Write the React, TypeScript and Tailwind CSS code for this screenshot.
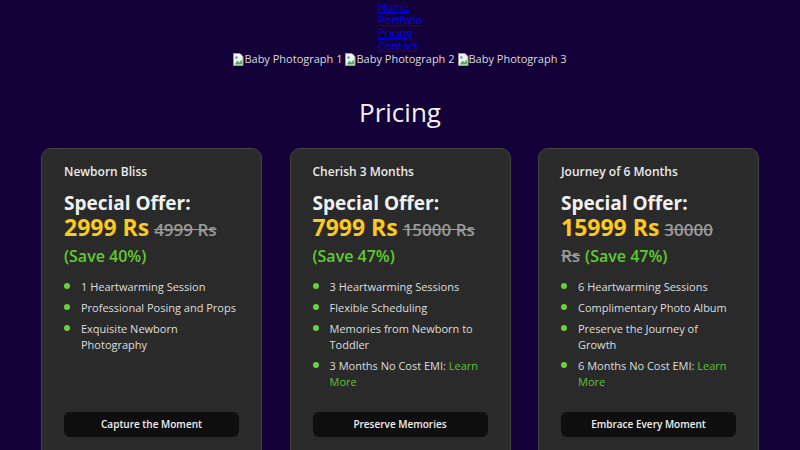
import React from 'react'

type Plan = {
  name: string
  price: string
  old: string
  save: string
  features: React.ReactNode[]
  cta: string
}

const learnMore = <a href="#" className="text-[#5bc236]">Learn More</a>

const plans: Plan[] = [
  {
    name: 'Newborn Bliss',
    price: '2999 Rs',
    old: '4999 Rs',
    save: '(Save 40%)',
    features: ['1 Heartwarming Session', 'Professional Posing and Props', 'Exquisite Newborn Photography'],
    cta: 'Capture the Moment',
  },
  {
    name: 'Cherish 3 Months',
    price: '7999 Rs',
    old: '15000 Rs',
    save: '(Save 47%)',
    features: [
      '3 Heartwarming Sessions',
      'Flexible Scheduling',
      'Memories from Newborn to Toddler',
      <>3 Months No Cost EMI: {learnMore}</>,
    ],
    cta: 'Preserve Memories',
  },
  {
    name: 'Journey of 6 Months',
    price: '15999 Rs',
    old: '30000 Rs',
    save: '(Save 47%)',
    features: [
      '6 Heartwarming Sessions',
      'Complimentary Photo Album',
      'Preserve the Journey of Growth',
      <>6 Months No Cost EMI: {learnMore}</>,
    ],
    cta: 'Embrace Every Moment',
  },
]

function BrokenImage({ alt }: { alt: string }) {
  return (
    <span className="inline-flex items-center">
      <svg width="11" height="13" viewBox="0 0 11 13">
        <path d="M0.5 0.5h6.5l3 3v9h-9.5z" fill="#f4f4f4" stroke="#9a9a9a" strokeWidth="1" />
        <path d="M1.5 11.5l3-4 2 2 2-3 1 5z" fill="#4caf50" />
        <circle cx="3.5" cy="4.5" r="1.2" fill="#4a90d9" />
      </svg>
      {alt}
    </span>
  )
}

export default function App() {
  return (
    <div className="min-h-[450px] bg-[#130038] text-white" style={{ fontFamily: '"Open Sans", sans-serif' }}>
      <nav className="flex justify-center">
        <ul className="text-[11px] leading-[13px]">
          {['Home', 'Portfolio', 'Pricing', 'Contact'].map(l => (
            <li key={l}>
              <a href="#" className="text-[#0000ee] underline">{l}</a>
            </li>
          ))}
        </ul>
      </nav>

      <div className="flex justify-center gap-[3px] text-[11px] leading-[14px] text-[#dcdcdc]">
        <BrokenImage alt="Baby Photograph 1" />
        <BrokenImage alt="Baby Photograph 2" />
        <BrokenImage alt="Baby Photograph 3" />
      </div>

      <section className="pt-[28px]">
        <h2 className="text-center text-[26px] leading-[36px] text-[#f2f2f2]">Pricing</h2>

        <div className="mx-auto mt-[18px] grid w-[718px] grid-cols-3 gap-[27.5px]">
          {plans.map(p => (
            <div key={p.name} className="flex flex-col rounded-[10px] border border-[#454545] bg-[#2a2a2a] px-[22px] pt-[14px] pb-6">
              <h3 className="text-[12px] font-semibold leading-[18px] text-[#ececec]">{p.name}</h3>
              <p className="mt-[9px] text-[19px] font-bold leading-[26px] text-[#f2f2f2]">
                Special Offer:
                <br />
                <span className="text-[23px] leading-[18px] text-[#fcc91c]">{p.price}</span>{' '}
                <del className="text-[17px] font-semibold leading-[18px] text-[#9b9b9b]">{p.old}</del>{' '}
                <span className="text-[16px] font-semibold leading-[18px] text-[#5fcd2e]">{p.save}</span>
              </p>
              <ul className="mt-[11px] mb-[22px] flex flex-col gap-[5px] text-[11px] leading-[16px] text-[#dedede]">
                {p.features.map((f, i) => (
                  <li key={i} className="flex">
                    <span className="mt-[4px] mr-[11px] h-[6px] w-[6px] shrink-0 rounded-full bg-[#6ad13c]" />
                    <span>{f}</span>
                  </li>
                ))}
              </ul>
              <button className="mt-auto h-[25px] rounded-[6px] bg-[#0e0e0e] text-[10px] font-semibold text-[#f0f0f0]">
                {p.cta}
              </button>
            </div>
          ))}
        </div>
      </section>
    </div>
  )
}
